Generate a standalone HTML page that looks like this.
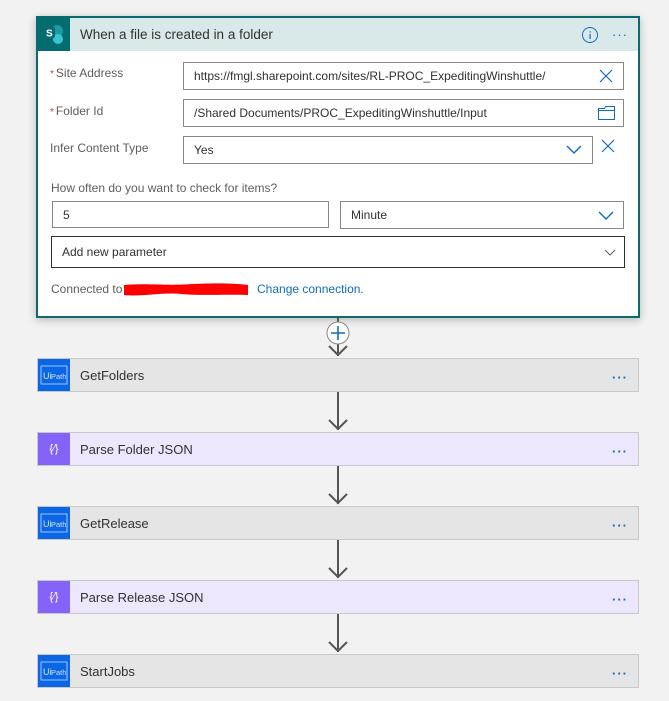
<!DOCTYPE html><html><head><style>
*{box-sizing:border-box;margin:0;padding:0}
body{width:669px;height:701px;background:#f2f2f2;font-family:"Liberation Sans",sans-serif;position:relative;overflow:hidden;font-size:13px;color:#323130}
.abs{position:absolute}
.card{position:absolute;left:36px;top:16px;width:604px;height:302px;background:#fff;border:2px solid #0b6a6e;box-shadow:0 2px 8px rgba(0,0,0,.25)}
.hdr{position:absolute;left:0;top:0;width:600px;height:33px;background:#d9e9e9}
.lbl{position:absolute;font-size:12px;color:#605e5c}
.req{color:#d13438;font-size:10px;margin-right:2px}
.inp{position:absolute;border:1px solid #8a8886;background:#fff;font-size:12px;color:#323130;padding-left:10px;display:flex;align-items:center}
.act{position:absolute;left:37px;width:602px;height:34px;border:1px solid #c8c8c8;background:#e5e5e5}
.act .ic{position:absolute;left:0;top:0;width:32px;height:32px;display:flex;align-items:center;justify-content:center;color:#fff}
.act .t{position:absolute;left:42px;top:9px;font-size:13px;color:#323130}
.dots{position:absolute;right:10px;top:11px;color:#0f6cbd;font-size:13px;letter-spacing:1px;font-weight:bold}
.line{position:absolute;left:337px;width:2px;background:#555}
</style></head><body>
<div class="card">
 <div class="hdr"></div>
 <div class="abs" style="left:0;top:0;width:32px;height:33px;background:#036c70">
  <svg width="32" height="33"><circle cx="19" cy="13" r="6" fill="#1a9ba1"/><circle cx="20" cy="21" r="5" fill="#37c6d0"/><rect x="6" y="9" width="11" height="11" rx="2" fill="#0b6a6e"/><text x="8" y="18.5" fill="#fff" font-size="10" font-weight="bold" font-family="Liberation Sans">S</text></svg>
 </div>
 <div class="abs" style="left:42px;top:9px;font-size:13.5px;color:#323130">When a file is created in a folder</div>
 <svg class="abs" style="left:543px;top:8px" width="18" height="18"><circle cx="9" cy="9" r="7.5" fill="none" stroke="#0f6cbd" stroke-width="1"/><rect x="8.5" y="8" width="1.2" height="5" fill="#0f6cbd"/><rect x="8.5" y="5.3" width="1.2" height="1.3" fill="#0f6cbd"/></svg>
 <div class="abs" style="left:574px;top:9px;color:#0f6cbd;font-size:13px;letter-spacing:1px">···</div>

 <div class="lbl" style="left:12px;top:48px"><span class="req">*</span>Site Address</div>
 <div class="inp" style="left:145px;top:44px;width:441px;height:28px">https://fmgl.sharepoint.com/sites/RL-PROC_ExpeditingWinshuttle/</div>
 <svg class="abs" style="left:561px;top:51px" width="14" height="14"><path d="M1 1L13 13M13 1L1 13" stroke="#0f6cbd" stroke-width="1.2"/></svg>

 <div class="lbl" style="left:12px;top:86px"><span class="req">*</span>Folder Id</div>
 <div class="inp" style="left:145px;top:81px;width:441px;height:28px">/Shared Documents/PROC_ExpeditingWinshuttle/Input</div>
 <svg class="abs" style="left:560px;top:88px" width="17" height="14"><path d="M0.5 2.5H6.5L7.5 0.5H16.5V13.5H0.5Z M0.5 4.5H16.5" fill="none" stroke="#0f6cbd" stroke-width="1"/></svg>

 <div class="lbl" style="left:12px;top:123px">Infer Content Type</div>
 <div class="inp" style="left:145px;top:118px;width:410px;height:28px">Yes</div>
 <svg class="abs" style="left:528px;top:127px" width="16" height="10"><path d="M1 1L8 8L15 1" fill="none" stroke="#0f6cbd" stroke-width="1.4"/></svg>
 <svg class="abs" style="left:563px;top:121px" width="14" height="14"><path d="M1 1L13 13M13 1L1 13" stroke="#0f6cbd" stroke-width="1.2"/></svg>

 <div class="lbl" style="left:13px;top:163px">How often do you want to check for items?</div>
 <div class="inp" style="left:14px;top:183px;width:277px;height:27px">5</div>
 <div class="inp" style="left:302px;top:183px;width:284px;height:28px">Minute</div>
 <svg class="abs" style="left:560px;top:193px" width="16" height="10"><path d="M1 1L8 8L15 1" fill="none" stroke="#0f6cbd" stroke-width="1.4"/></svg>

 <div class="inp" style="left:13px;top:218px;width:574px;height:32px;border-color:#323130">Add new parameter</div>
 <svg class="abs" style="left:566px;top:231px" width="12" height="7"><path d="M1 1L6 6L11 1" fill="none" stroke="#605e5c" stroke-width="1"/></svg>

 <div class="lbl" style="left:13px;top:264px">Connected to</div>
 <svg class="abs" style="left:84px;top:262px" width="128" height="18"><path d="M2 5C30 3 40 6 70 4C95 3 110 3 126 5V15C100 14 80 16 60 14C40 12 20 17 2 15Z" fill="#f00"/></svg>
 <div class="abs" style="left:219px;top:264px;font-size:12px;color:#0f6cbd">Change connection.</div>
</div>

<div class="line" style="top:318px;height:38px"></div>
<svg class="abs" style="left:325px;top:320px" width="26" height="26"><circle cx="13" cy="13" r="11" fill="#fff" stroke="#8a8886" stroke-width="1"/><path d="M13 6V20M6 13H20" stroke="#0f6cbd" stroke-width="1.6"/></svg>

<div class="line" style="top:392px;height:38px"></div>
<div class="line" style="top:466px;height:38px"></div>
<div class="line" style="top:540px;height:38px"></div>
<div class="line" style="top:614px;height:38px"></div>
<svg class="abs" style="left:0;top:0" width="669" height="701">
 <g fill="none" stroke="#555" stroke-width="2">
 <path d="M329 346L338 355L347 346"/>
 <path d="M329 420L338 429L347 420"/>
 <path d="M329 494L338 503L347 494"/>
 <path d="M329 568L338 577L347 568"/>
 <path d="M329 642L338 651L347 642"/>
 </g>
</svg>

<div class="act" style="top:358px"><div class="ic" style="background:#0a66e4"><svg width="32" height="32"><rect x="3" y="7" width="26" height="18" fill="none" stroke="#9cc4ff" stroke-width="1"/><text x="5" y="20" fill="#cfe2ff" font-size="9" font-family="Liberation Sans">Ui</text><text x="13" y="20" fill="#cfe2ff" font-size="7.5" font-family="Liberation Sans">Path</text></svg></div><div class="t">GetFolders</div><div class="dots">···</div></div>
<div class="act" style="top:432px;background:#ece7fd"><div class="ic" style="background:#8463f9;font-size:11px">{∕}</div><div class="t">Parse Folder JSON</div><div class="dots">···</div></div>
<div class="act" style="top:506px"><div class="ic" style="background:#0a66e4"><svg width="32" height="32"><rect x="3" y="7" width="26" height="18" fill="none" stroke="#9cc4ff" stroke-width="1"/><text x="5" y="20" fill="#cfe2ff" font-size="9" font-family="Liberation Sans">Ui</text><text x="13" y="20" fill="#cfe2ff" font-size="7.5" font-family="Liberation Sans">Path</text></svg></div><div class="t">GetRelease</div><div class="dots">···</div></div>
<div class="act" style="top:580px;background:#ece7fd"><div class="ic" style="background:#8463f9;font-size:11px">{∕}</div><div class="t">Parse Release JSON</div><div class="dots">···</div></div>
<div class="act" style="top:654px"><div class="ic" style="background:#0a66e4"><svg width="32" height="32"><rect x="3" y="7" width="26" height="18" fill="none" stroke="#9cc4ff" stroke-width="1"/><text x="5" y="20" fill="#cfe2ff" font-size="9" font-family="Liberation Sans">Ui</text><text x="13" y="20" fill="#cfe2ff" font-size="7.5" font-family="Liberation Sans">Path</text></svg></div><div class="t">StartJobs</div><div class="dots">···</div></div>
</body></html>
